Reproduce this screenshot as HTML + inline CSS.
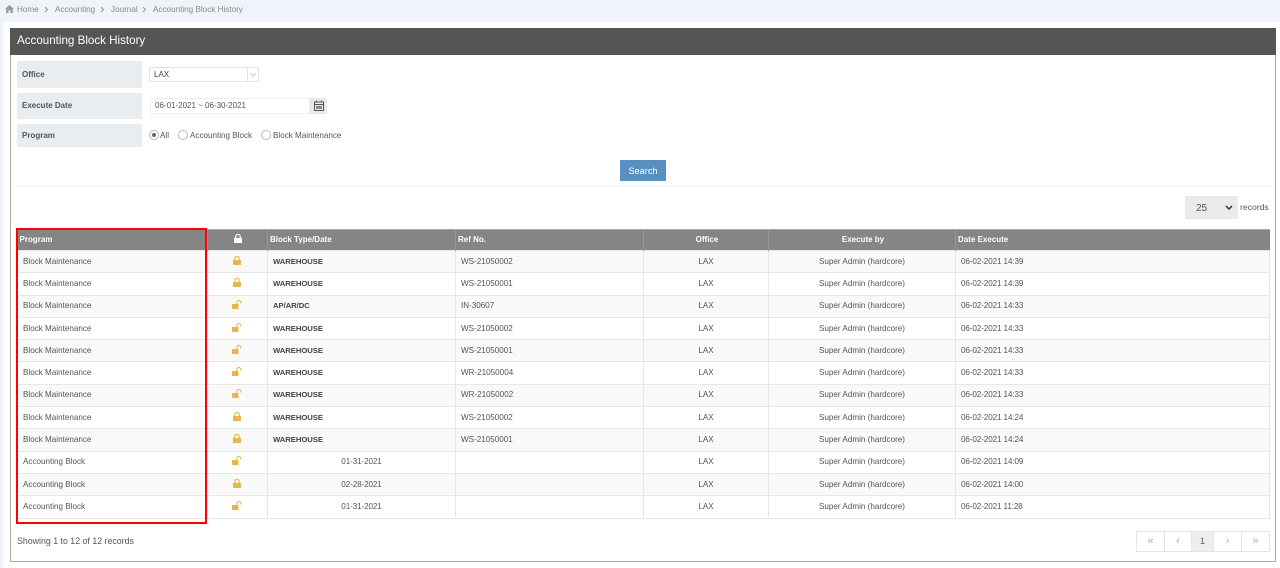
<!DOCTYPE html>
<html><head><meta charset="utf-8"><style>
html,body{margin:0;padding:0;width:1280px;height:568px;overflow:hidden;background:#fff}
body{font-family:"Liberation Sans",sans-serif;font-size:8.100px;color:#555;position:relative}
.a{position:absolute;white-space:nowrap}
.lab{position:absolute;left:17px;width:125px;background:#e9edef;font-weight:bold;font-size:8px;color:#555;padding-left:5px;box-sizing:border-box}
table{position:absolute;left:17px;top:229px;width:1253px;border-collapse:collapse;table-layout:fixed;font-size:8.100px}
th{background:#858585;color:#fff;height:21px;padding:0 0 1px 2px;font-size:8px;border-left:1px solid #999;border-top:1px solid #aaa;text-align:left;box-sizing:border-box}
th:first-child{border-left:0}
td{height:22.300px;padding:0 5px 1px;border:1px solid #e7e7e7;box-sizing:border-box;color:#555;white-space:nowrap}
tr.o td{background:#f9f9f9}
.c{text-align:center}
th.c{text-align:center}
.b{font-weight:bold;color:#444;font-size:7.700px;letter-spacing:-.05px}
.d{letter-spacing:-.1px}
td svg,th svg{display:block;margin:-2px auto 0;position:relative;left:-1px}
.pg{position:absolute;top:531px;height:21px;border:1px solid #e5e5e5;box-sizing:border-box;text-align:center;line-height:18px;color:#aaa;font-size:11px;background:#fff}
.rd{position:absolute;top:130px;width:10px;height:10px;box-sizing:border-box;border:1px solid #bbb;border-radius:50%;background:#fff}
.cr{position:absolute;top:6px}
.bc{left:0;top:5px;color:#888;font-size:8.150px}
</style></head><body>
<div class="a" style="left:0;top:0;width:1280px;height:22px;background:#f0f3fa"></div>
<div class="a" style="left:0;top:22px;width:3px;height:546px;background:#f0f3fa"></div>
<svg class="a" style="left:5px;top:5px" width="9" height="8" viewBox="0 0 9 8"><path d="M4.500 0 0 4h1.200v4h2.300V5.300h2V8h2.300V4H9z" fill="#999"/></svg>
<div class="a bc" style="left:17px">Home</div>
<svg class="cr" style="left:44px" width="5" height="7" viewBox="0 0 5 7"><path d="M1 1 3.500 3.500 1 6" fill="none" stroke="#999"/></svg>
<div class="a bc" style="left:55px">Accounting</div>
<svg class="cr" style="left:100px" width="5" height="7" viewBox="0 0 5 7"><path d="M1 1 3.500 3.500 1 6" fill="none" stroke="#999"/></svg>
<div class="a bc" style="left:111px">Journal</div>
<svg class="cr" style="left:142px" width="5" height="7" viewBox="0 0 5 7"><path d="M1 1 3.500 3.500 1 6" fill="none" stroke="#999"/></svg>
<div class="a bc" style="left:153px">Accounting Block History</div>

<div class="a" style="left:10px;top:28px;width:1266px;height:534px;border:1px solid #aaa;border-top:0;box-sizing:border-box"></div>
<div class="a" style="left:10px;top:28px;width:1266px;height:27px;background:#555"></div>
<div class="a" style="left:17px;top:33px;color:#fff;font-size:11.600px;line-height:15px">Accounting Block History</div>

<div class="lab" style="top:61px;height:27px;line-height:27px">Office</div>
<div class="lab" style="top:93px;height:26px;line-height:26px">Execute Date</div>
<div class="lab" style="top:124px;height:23px;line-height:23px">Program</div>

<div class="a" style="left:149px;top:67px;width:110px;height:15px;border:1px solid #e3e3e3;box-sizing:border-box;line-height:13px;padding-left:4px;color:#444;font-size:8px">LAX</div>
<div class="a" style="left:247px;top:68px;width:1px;height:13px;background:#e3e3e3"></div>
<svg class="a" style="left:250px;top:73px" width="6" height="4" viewBox="0 0 6 4"><path d="M.500.500 3 3 5.500.500" fill="none" stroke="#bbb" stroke-width=".8"/></svg>

<div class="a" style="left:150px;top:98px;width:160px;height:16px;border:1px solid #eee;box-sizing:border-box;line-height:14px;padding-left:4px;color:#555;font-size:8px">06-01-2021 ~ 06-30-2021</div>
<div class="a" style="left:310px;top:98px;width:17px;height:16px;background:#e8e8e8"></div>
<svg class="a" style="left:314px;top:100px" width="10" height="11" viewBox="0 0 10 11"><path d="M.500 2h9v8.500h-9zM.500 4.500h9M2.500.500v2M7.500.500v2" fill="none" stroke="#555" stroke-width="1"/><path d="M2 6h6v3H2z" fill="#888"/></svg>

<div class="rd" style="left:149px"></div><div class="a" style="left:152px;top:133px;width:4px;height:4px;border-radius:50%;background:#666"></div>
<div class="a" style="left:160px;top:131px;font-size:8.100px">All</div>
<div class="rd" style="left:178px"></div>
<div class="a" style="left:190px;top:131px;font-size:8.100px">Accounting Block</div>
<div class="rd" style="left:261px"></div>
<div class="a" style="left:273px;top:131px;font-size:8.100px">Block Maintenance</div>

<div class="a" style="left:620px;top:160px;width:46px;height:21px;background:#5a90c0;color:#fff;text-align:center;line-height:22px;font-size:9px;letter-spacing:.1px">Search</div>
<div class="a" style="left:16px;top:186px;width:1254px;height:1px;background:#eee"></div>

<div class="a" style="left:1185px;top:196px;width:53px;height:23px;background:#eaeaea"></div>
<div class="a" style="left:1196px;top:203px;font-size:10px;color:#555">25</div>
<svg class="a" style="left:1225px;top:205px" width="8" height="5" viewBox="0 0 8 5"><path d="M1 1 4 4 7 1" fill="none" stroke="#333" stroke-width="1.500"/></svg>
<div class="a" style="left:1240px;top:202px;font-size:8.600px">records</div>

<table>
<colgroup><col style="width:190px"><col style="width:60px"><col style="width:188px"><col style="width:188px"><col style="width:125px"><col style="width:187px"><col></colgroup>
<tr><th>Program</th><th class="c"><svg width="8" height="9" viewBox="0 0 8 9"><path d="M0 4h8v5H0z" fill="#fff"/><path d="M1.800 4V2.500a2.200 2.200 0 0 1 4.400 0V4" fill="none" stroke="#fff" stroke-width="1.200"/></svg></th><th>Block Type/Date</th><th>Ref No.</th><th class="c">Office</th><th class="c">Execute by</th><th>Date Execute</th></tr>
<tr class="o"><td>Block Maintenance</td><td class="c"><svg width="8" height="9" viewBox="0 0 8 9"><path d="M0 4h8v5H0z" fill="#e5b84c"/><path d="M1.800 4V2.500a2.200 2.200 0 0 1 4.400 0V4" fill="none" stroke="#e5b84c" stroke-width="1.200"/></svg></td><td class="b">WAREHOUSE</td><td>WS-21050002</td><td class="c">LAX</td><td class="c">Super Admin (hardcore)</td><td class="d">06-02-2021 14:39</td></tr>
<tr><td>Block Maintenance</td><td class="c"><svg width="8" height="9" viewBox="0 0 8 9"><path d="M0 4h8v5H0z" fill="#e5b84c"/><path d="M1.800 4V2.500a2.200 2.200 0 0 1 4.400 0V4" fill="none" stroke="#e5b84c" stroke-width="1.200"/></svg></td><td class="b">WAREHOUSE</td><td>WS-21050001</td><td class="c">LAX</td><td class="c">Super Admin (hardcore)</td><td class="d">06-02-2021 14:39</td></tr>
<tr class="o"><td>Block Maintenance</td><td class="c"><svg width="10" height="9" viewBox="0 0 10 9"><path d="M0 4h6.500v5H0z" fill="#e5b84c"/><path d="M4.800 4V2.500a2 2 0 0 1 4 0V3.500" fill="none" stroke="#e5b84c" stroke-width="1.100"/></svg></td><td class="b">AP/AR/DC</td><td>IN-30607</td><td class="c">LAX</td><td class="c">Super Admin (hardcore)</td><td class="d">06-02-2021 14:33</td></tr>
<tr><td>Block Maintenance</td><td class="c"><svg width="10" height="9" viewBox="0 0 10 9"><path d="M0 4h6.500v5H0z" fill="#e5b84c"/><path d="M4.800 4V2.500a2 2 0 0 1 4 0V3.500" fill="none" stroke="#e5b84c" stroke-width="1.100"/></svg></td><td class="b">WAREHOUSE</td><td>WS-21050002</td><td class="c">LAX</td><td class="c">Super Admin (hardcore)</td><td class="d">06-02-2021 14:33</td></tr>
<tr class="o"><td>Block Maintenance</td><td class="c"><svg width="10" height="9" viewBox="0 0 10 9"><path d="M0 4h6.500v5H0z" fill="#e5b84c"/><path d="M4.800 4V2.500a2 2 0 0 1 4 0V3.500" fill="none" stroke="#e5b84c" stroke-width="1.100"/></svg></td><td class="b">WAREHOUSE</td><td>WS-21050001</td><td class="c">LAX</td><td class="c">Super Admin (hardcore)</td><td class="d">06-02-2021 14:33</td></tr>
<tr><td>Block Maintenance</td><td class="c"><svg width="10" height="9" viewBox="0 0 10 9"><path d="M0 4h6.500v5H0z" fill="#e5b84c"/><path d="M4.800 4V2.500a2 2 0 0 1 4 0V3.500" fill="none" stroke="#e5b84c" stroke-width="1.100"/></svg></td><td class="b">WAREHOUSE</td><td>WR-21050004</td><td class="c">LAX</td><td class="c">Super Admin (hardcore)</td><td class="d">06-02-2021 14:33</td></tr>
<tr class="o"><td>Block Maintenance</td><td class="c"><svg width="10" height="9" viewBox="0 0 10 9"><path d="M0 4h6.500v5H0z" fill="#e5b84c"/><path d="M4.800 4V2.500a2 2 0 0 1 4 0V3.500" fill="none" stroke="#e5b84c" stroke-width="1.100"/></svg></td><td class="b">WAREHOUSE</td><td>WR-21050002</td><td class="c">LAX</td><td class="c">Super Admin (hardcore)</td><td class="d">06-02-2021 14:33</td></tr>
<tr><td>Block Maintenance</td><td class="c"><svg width="8" height="9" viewBox="0 0 8 9"><path d="M0 4h8v5H0z" fill="#e5b84c"/><path d="M1.800 4V2.500a2.200 2.200 0 0 1 4.400 0V4" fill="none" stroke="#e5b84c" stroke-width="1.200"/></svg></td><td class="b">WAREHOUSE</td><td>WS-21050002</td><td class="c">LAX</td><td class="c">Super Admin (hardcore)</td><td class="d">06-02-2021 14:24</td></tr>
<tr class="o"><td>Block Maintenance</td><td class="c"><svg width="8" height="9" viewBox="0 0 8 9"><path d="M0 4h8v5H0z" fill="#e5b84c"/><path d="M1.800 4V2.500a2.200 2.200 0 0 1 4.400 0V4" fill="none" stroke="#e5b84c" stroke-width="1.200"/></svg></td><td class="b">WAREHOUSE</td><td>WS-21050001</td><td class="c">LAX</td><td class="c">Super Admin (hardcore)</td><td class="d">06-02-2021 14:24</td></tr>
<tr><td>Accounting Block</td><td class="c"><svg width="10" height="9" viewBox="0 0 10 9"><path d="M0 4h6.500v5H0z" fill="#e5b84c"/><path d="M4.800 4V2.500a2 2 0 0 1 4 0V3.500" fill="none" stroke="#e5b84c" stroke-width="1.100"/></svg></td><td class="c d">01-31-2021</td><td></td><td class="c">LAX</td><td class="c">Super Admin (hardcore)</td><td class="d">06-02-2021 14:09</td></tr>
<tr class="o"><td>Accounting Block</td><td class="c"><svg width="8" height="9" viewBox="0 0 8 9"><path d="M0 4h8v5H0z" fill="#e5b84c"/><path d="M1.800 4V2.500a2.200 2.200 0 0 1 4.400 0V4" fill="none" stroke="#e5b84c" stroke-width="1.200"/></svg></td><td class="c d">02-28-2021</td><td></td><td class="c">LAX</td><td class="c">Super Admin (hardcore)</td><td class="d">06-02-2021 14:00</td></tr>
<tr><td>Accounting Block</td><td class="c"><svg width="10" height="9" viewBox="0 0 10 9"><path d="M0 4h6.500v5H0z" fill="#e5b84c"/><path d="M4.800 4V2.500a2 2 0 0 1 4 0V3.500" fill="none" stroke="#e5b84c" stroke-width="1.100"/></svg></td><td class="c d">01-31-2021</td><td></td><td class="c">LAX</td><td class="c">Super Admin (hardcore)</td><td class="d">06-02-2021 11:28</td></tr>
</table>

<div class="a" style="left:16px;top:228px;width:191px;height:296px;border:2px solid #f00;box-sizing:border-box"></div>

<div class="a" style="left:17px;top:536px;font-size:8.800px">Showing 1 to 12 of 12 records</div>
<div class="pg" style="left:1136px;width:29px">«</div>
<div class="pg" style="left:1164px;width:28px">‹</div>
<div class="pg" style="left:1191px;width:23px;background:#eee;color:#666;font-size:9px">1</div>
<div class="pg" style="left:1213px;width:29px">›</div>
<div class="pg" style="left:1241px;width:29px">»</div>
</body></html>
